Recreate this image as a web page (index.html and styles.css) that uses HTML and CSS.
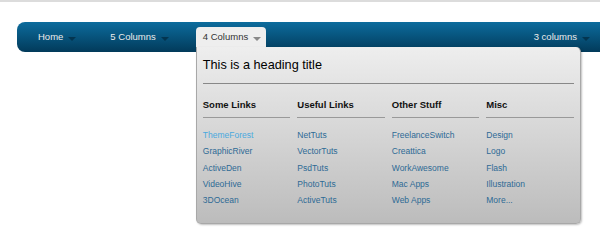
FILE: index.html
```html
<!DOCTYPE html>
<html lang="en">
<head>
  <meta charset="UTF-8" />
  <title>Mega Menu</title>
  <link rel="stylesheet" href="styles.css">
</head>
<body>
  <div class="page">
    <ul class="menu">
      <li><a href="#">Home</a><span class="seta"></span></li>
      <li><a href="#">5 Columns</a><span class="seta"></span></li>
      <li class="ativo">
        <a href="#">4 Columns</a><span class="seta"></span>
        <div class="dropdown">
          <h2>This is a heading title</h2>
          <div class="colunas">
            <div class="coluna">
              <h3>Some Links</h3>
              <ul>
                <li><a href="#" class="hover">ThemeForest</a></li>
                <li><a href="#">GraphicRiver</a></li>
                <li><a href="#">ActiveDen</a></li>
                <li><a href="#">VideoHive</a></li>
                <li><a href="#">3DOcean</a></li>
              </ul>
            </div>
            <div class="coluna">
              <h3>Useful Links</h3>
              <ul>
                <li><a href="#">NetTuts</a></li>
                <li><a href="#">VectorTuts</a></li>
                <li><a href="#">PsdTuts</a></li>
                <li><a href="#">PhotoTuts</a></li>
                <li><a href="#">ActiveTuts</a></li>
              </ul>
            </div>
            <div class="coluna">
              <h3>Other Stuff</h3>
              <ul>
                <li><a href="#">FreelanceSwitch</a></li>
                <li><a href="#">Creattica</a></li>
                <li><a href="#">WorkAwesome</a></li>
                <li><a href="#">Mac Apps</a></li>
                <li><a href="#">Web Apps</a></li>
              </ul>
            </div>
            <div class="coluna">
              <h3>Misc</h3>
              <ul>
                <li><a href="#">Design</a></li>
                <li><a href="#">Logo</a></li>
                <li><a href="#">Flash</a></li>
                <li><a href="#">Illustration</a></li>
                <li><a href="#">More...</a></li>
              </ul>
            </div>
          </div>
        </div>
      </li>
      <li class="direita"><a href="#">3 columns</a><span class="seta"></span></li>
    </ul>
  </div>
</body>
</html>
```

FILE: styles.css
```css
html,
body {
  height: 100%;
}

body {
  margin: 0;
  box-sizing: border-box;
  background-color: #fff;
  border-top: 2px solid #dcdcdc;
  font-family: "Liberation Sans", Arial, sans-serif;
}

.page {
  min-height: 100%;
  box-sizing: border-box;
  padding: 20px 0 0 17px;
}

ul {
  list-style: none;
  margin: 0;
  padding: 0;
}

a {
  text-decoration: none;
}

.menu {
  display: flex;
  height: 30px;
  padding-left: 14px;
  background: linear-gradient(#0c6c9d, #023a5a);
  border-radius: 8px 0 0 8px;
}

.menu > li {
  position: relative;
  display: flex;
  align-items: center;
  height: 20px;
  margin-top: 5px;
  margin-right: 22px;
  padding: 0 5px 0 7px;
  font-size: 9.5px;
  line-height: 20px;
}

.menu > li > a {
  color: #ececec;
}

.seta {
  width: 0;
  height: 0;
  margin: 3px 0 0 5px;
  border-left: 4px solid transparent;
  border-right: 4px solid transparent;
  border-top: 4px solid #033550;
}

.menu > li.ativo {
  background-color: #eeeeee;
  border-radius: 4px 4px 0 0;
}

.menu > li.ativo > a {
  color: #333;
}

.menu > li.ativo .seta {
  border-top-color: #888;
}

.menu > li.direita {
  margin-left: auto;
  margin-right: 0;
  padding-right: 10px;
}

.dropdown {
  position: absolute;
  top: 100%;
  left: 0;
  z-index: 5;
  width: 371px;
  padding: 10px 6px 15px;
  background: linear-gradient(#eeeeee, #bcbcbc);
  border: 1px solid #a8a8a8;
  border-top: none;
  border-radius: 0 5px 5px 5px;
  box-shadow: 1px 1px 2px #00000040;
  line-height: normal;
}

.dropdown h2 {
  margin: 0 0 14px;
  padding-bottom: 9px;
  font-size: 12.7px;
  font-weight: normal;
  line-height: 17px;
  color: #000;
  border-bottom: 1px solid #888;
}

.colunas {
  display: grid;
  grid-template-columns: repeat(4, 1fr);
  gap: 7px;
}

.coluna h3 {
  margin: 0 0 9px;
  padding-bottom: 5px;
  font-size: 9.5px;
  line-height: 14px;
  color: #111;
  border-bottom: 1px solid #999;
}

.coluna li {
  font-size: 8.5px;
  line-height: 16.25px;
}

.coluna a {
  color: #2d6a95;
}

.coluna a.hover {
  color: #4aa9de;
}
```
